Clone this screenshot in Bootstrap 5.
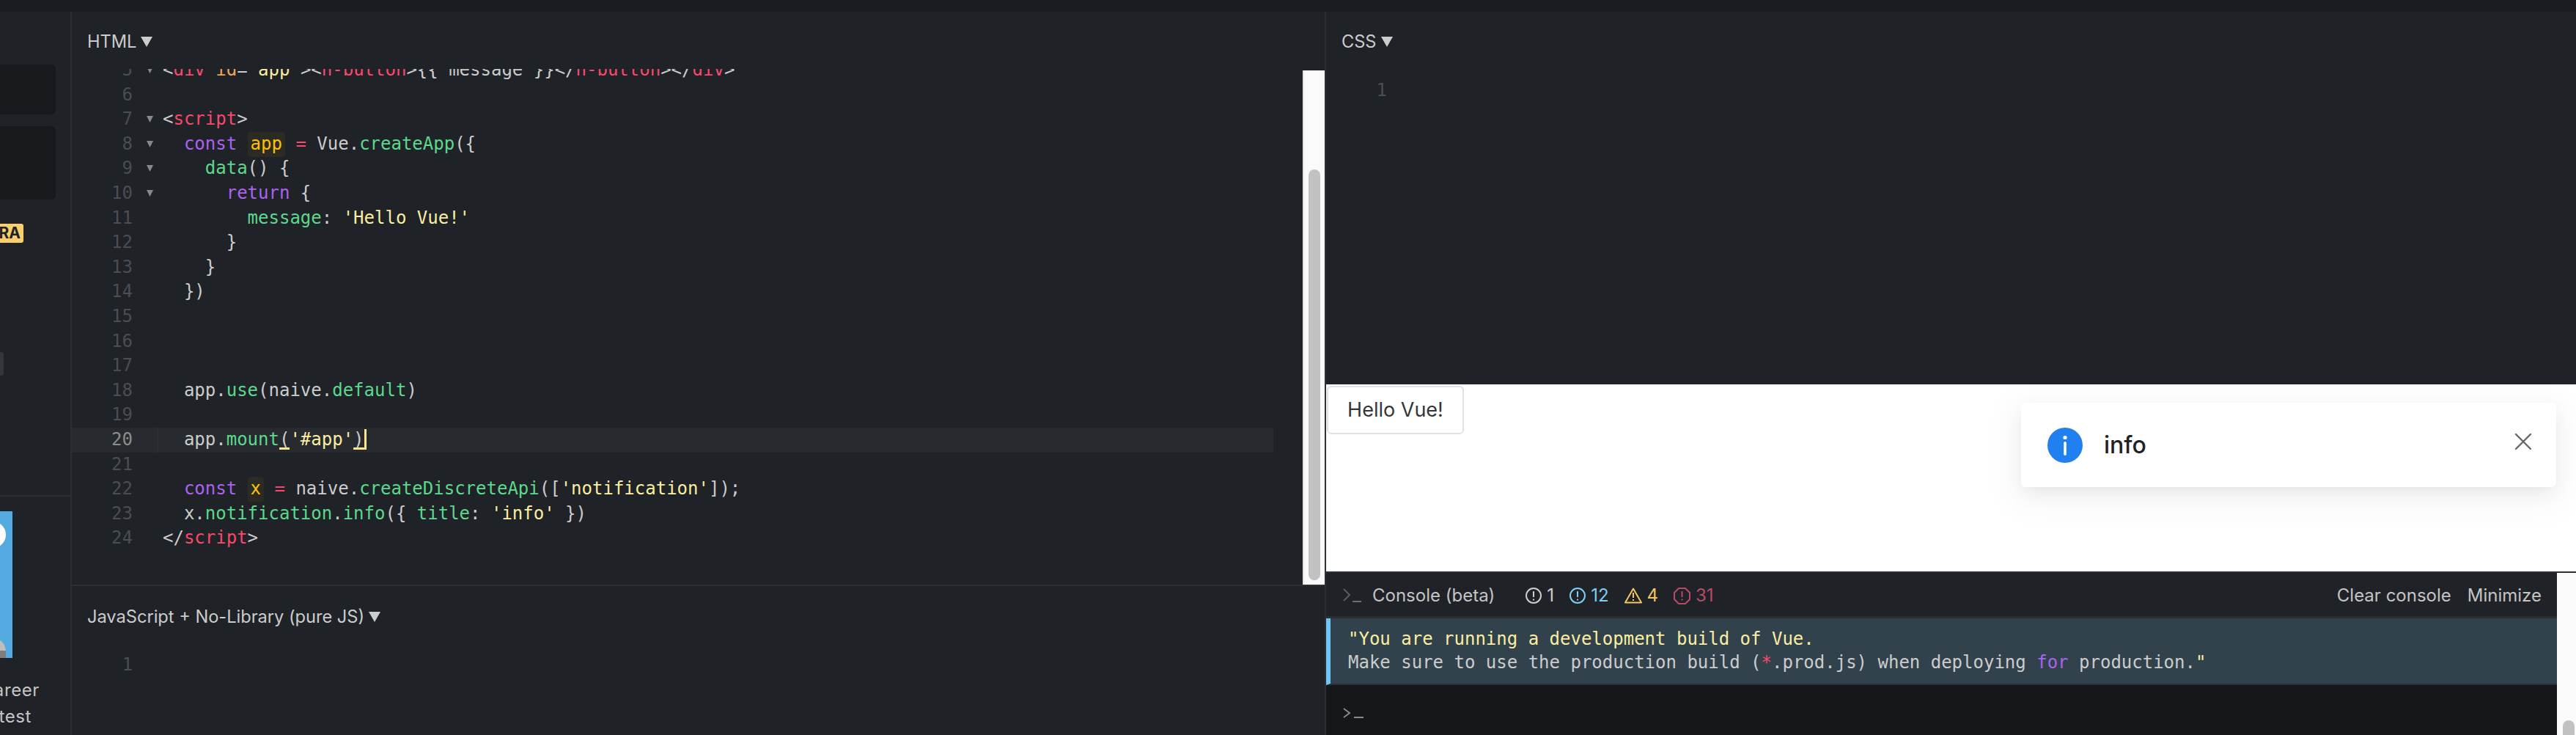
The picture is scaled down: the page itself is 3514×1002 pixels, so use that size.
<!DOCTYPE html>
<html lang="en">
<head>
<meta charset="utf-8">
<title>Editor</title>
<link href="https://cdn.jsdelivr.net/npm/bootstrap@5.3.0/dist/css/bootstrap.min.css" rel="stylesheet">
<style>
html,body{height:100%;overflow:hidden}
body{background:#1f2227;color:#ccc;font-family:Inter,"Liberation Sans",sans-serif;font-size:24px}
.topstrip{height:16px;background:#1a1c21;flex:none}
.workspace{height:986px}
.sidepane{width:98px;border-right:2px solid #2b2e33;overflow:hidden;flex:none}
.sidebox{width:76px;background:#17191d;border-radius:0 6px 6px 0}
.sb1{height:68px;margin-top:72px}
.sb2{height:100px;margin-top:16px}
.sidebadge{width:32px;height:26px;margin-top:33px;background:#f9cf6b;color:#1f2227;font-weight:700;font-size:21px;line-height:26px;border-radius:0 3px 3px 0;white-space:nowrap}
.sidechip{width:5px;height:32px;margin-top:149px;background:#33363b;border-radius:0 4px 4px 0}
.siderule{height:2px;background:#2b2e33;margin-top:163px}
.sideimg{display:block;margin-top:20px;flex:none}
.sidetext{width:54px;white-space:nowrap;line-height:36px;color:#c4c4c4;font-size:24px;letter-spacing:.6px}
.sidetext1{margin-top:26px}
.sidetext2{width:43px}
.midcol{width:1711px;border-right:2px solid #2b2e33;flex:none}
.rightcol{flex:1 1 0;min-width:0}
.htmlpane{height:783px;border-bottom:2px solid #2b2e33;flex:none}
.panelabel{height:78px;padding:4px 0 0 21px;color:#ccc;font-size:23.6px;flex:none}
.panelabel svg{margin-left:6px}
.codeclip{overflow:hidden;min-height:0}
.codescroll{min-width:0}
.coderows{margin-top:-15px;padding-right:40px}
.cl{height:33.6px;line-height:33.6px;font-family:"DejaVu Sans Mono","Liberation Mono",monospace;font-size:24px;color:#ccc;white-space:pre;font-variant-ligatures:none}
.lno{width:83px;text-align:right;color:#4a4d52;flex:none}
.fold{width:35px;margin-right:6px;flex:none;padding-left:19px;display:flex;align-items:center}
.cl.active{background:#272a2f}
.cl.active .lno{color:#8c8c8c}
.cl.active .fold{border-right:1px solid #2c2f34}
.src{position:relative}
.r{color:#f9486a}.p{color:#ab62f0}.g{color:#5cd98c}.y{color:#fbeea0}.o{color:#f0a356}
.hl{color:#ffc107;background:#2b2b24;padding:0 4px;border-radius:4px;display:inline-block;height:34px}
.mb{box-shadow:inset 0 -3px 0 #fde68a}
.caret{border-right:3px solid #fde68a;margin-right:-3px}
.vbar{width:30px;background:#fafafa;border-left:2px solid #e8e8e8;margin-top:2px;padding:0 6px 0 6px;flex:none}
.vthumb{width:16px;height:560px;margin-top:135px;background:#c1c1c1;border-radius:8px}
.cssarea{height:508px;flex:none;border:0}
.numonly{font-family:"DejaVu Sans Mono","Liberation Mono",monospace;color:#4a4d52;width:83px;text-align:right;height:33.6px;line-height:33.6px}
.cssnum{margin-top:13px}
.jsnum{margin-top:7px}
.jspane .panelabel{height:84px;padding-top:0}
.preview{height:255px;background:#fff;flex:none;position:relative}
.hellobtn{margin:2px 0 0 1px;width:187px;height:66px;border:2px solid #e0e0e6;border-radius:6px;background:#fff;color:#333639;font-size:27px;line-height:1;padding:0 0 2px}
.toast-box{position:absolute;left:948px;top:25px;width:730px;height:115px;background:#fff;border-radius:6px;box-shadow:0 6px 16px -9px rgba(0,0,0,.08),0 9px 28px 0 rgba(0,0,0,.05),0 12px 48px 16px rgba(0,0,0,.03);padding:0 33px 0 36px}
.toast-ico{flex:none}
.toast-title{font-size:32px;font-weight:500;color:#1f2225;margin-left:29px;line-height:1;margin-top:1px}
.closeico{margin-top:-10px}
.consolewrap{border-top:2px solid #2b2e33}
.conleft{min-width:0}
.consolehead{height:62px;border-bottom:3px solid #2b2e33;padding:3px 21px 0 22px;font-size:24px;flex:none}
.conlabel{color:#c4c4c4;margin-left:15px}
.cnt{margin-left:21px;gap:7px}
.cnt-first{margin-left:42px}
.cnt-d{color:#ccc}.cnt-i{color:#7fcdf5}.cnt-w{color:#f4c560}.cnt-e{color:#b84a67}
.conact{color:#c4c4c4;margin-left:22px}
.conmain{background:#16171b;min-height:0}
.conmsg{height:91px;background:#32424d;border-left:6px solid #6cc5f2;border-bottom:2px solid #2b2e33;padding:12px 0 0 24px;font-family:"DejaVu Sans Mono","Liberation Mono",monospace;font-size:24px;line-height:32px;white-space:pre;color:#ccc;flex:none}
.conprompt{padding:31px 0 0 23px}
.conprompt svg{display:block}
.conbar{width:26px;background:#fafafa;padding-left:8px;flex:none;overflow:hidden}
.conthumb{width:16px;height:40px;margin-top:201px;background:#c1c1c1;border-radius:8px}
</style>
</head>
<body>
<div class="d-flex flex-column vh-100">
<div class="topstrip"></div>
<div class="workspace d-flex">

<aside class="sidepane d-flex flex-column">
  <div class="sidebox sb1"></div>
  <div class="sidebox sb2"></div>
  <div class="sidebadge d-flex justify-content-end pe-1">EXTRA</div>
  <div class="sidechip"></div>
  <div class="siderule"></div>
  <svg class="sideimg" width="17" height="200" viewBox="0 0 17 200"><rect width="17" height="200" fill="#54a9e0"/><circle cx="-10" cy="32" r="18" fill="#fff"/><path d="M0 176Q6 178 8 190L8 200H0Z" fill="#bdbdbd"/><path d="M0 190H8V200H0Z" fill="#7d7d7d"/></svg>
  <div class="sidetext sidetext1 d-flex justify-content-end">Career</div>
  <div class="sidetext sidetext2 d-flex justify-content-end">Contest</div>
</aside>

<section class="midcol d-flex flex-column">
  <div class="htmlpane d-flex flex-column">
    <div class="panelabel d-flex align-items-center">HTML<svg width="16" height="14" viewBox="0 0 16 14"><path d="M0 0H16L8 14Z" fill="#ccc"/></svg></div>
    <div class="codeclip d-flex flex-grow-1">
      <div class="codescroll flex-grow-1"><div class="coderows">
<div class="cl d-flex"><span class="lno">5</span><span class="fold"><svg width="9" height="10" viewBox="0 0 9 10"><path d="M0 0H9L4.500 9Z" fill="#888"/></svg></span><span class="src">&lt;<span class="r">div</span> <span class="o">id</span>=<span class="y">"app"</span>&gt;&lt;<span class="r">n-button</span>&gt;{{ message }}&lt;/<span class="r">n-button</span>&gt;&lt;/<span class="r">div</span>&gt;</span></div>
<div class="cl d-flex"><span class="lno">6</span><span class="fold"></span><span class="src"></span></div>
<div class="cl d-flex"><span class="lno">7</span><span class="fold"><svg width="9" height="10" viewBox="0 0 9 10"><path d="M0 0H9L4.500 9Z" fill="#888"/></svg></span><span class="src">&lt;<span class="r">script</span>&gt;</span></div>
<div class="cl d-flex"><span class="lno">8</span><span class="fold"><svg width="9" height="10" viewBox="0 0 9 10"><path d="M0 0H9L4.500 9Z" fill="#888"/></svg></span><span class="src">  <span class="p">const</span> <span class="hl">app</span> <span class="r">=</span> Vue.<span class="g">createApp</span>({</span></div>
<div class="cl d-flex"><span class="lno">9</span><span class="fold"><svg width="9" height="10" viewBox="0 0 9 10"><path d="M0 0H9L4.500 9Z" fill="#888"/></svg></span><span class="src">    <span class="g">data</span>() {</span></div>
<div class="cl d-flex"><span class="lno">10</span><span class="fold"><svg width="9" height="10" viewBox="0 0 9 10"><path d="M0 0H9L4.500 9Z" fill="#888"/></svg></span><span class="src">      <span class="p">return</span> {</span></div>
<div class="cl d-flex"><span class="lno">11</span><span class="fold"></span><span class="src">        <span class="g">message</span>: <span class="y">'Hello Vue!'</span></span></div>
<div class="cl d-flex"><span class="lno">12</span><span class="fold"></span><span class="src">      }</span></div>
<div class="cl d-flex"><span class="lno">13</span><span class="fold"></span><span class="src">    }</span></div>
<div class="cl d-flex"><span class="lno">14</span><span class="fold"></span><span class="src">  })</span></div>
<div class="cl d-flex"><span class="lno">15</span><span class="fold"></span><span class="src"></span></div>
<div class="cl d-flex"><span class="lno">16</span><span class="fold"></span><span class="src"></span></div>
<div class="cl d-flex"><span class="lno">17</span><span class="fold"></span><span class="src"></span></div>
<div class="cl d-flex"><span class="lno">18</span><span class="fold"></span><span class="src">  app.<span class="g">use</span>(naive.<span class="g">default</span>)</span></div>
<div class="cl d-flex"><span class="lno">19</span><span class="fold"></span><span class="src"></span></div>
<div class="cl d-flex active"><span class="lno">20</span><span class="fold"></span><span class="src">  app.<span class="g">mount</span><span class="mb">(</span><span class="y">'#app'</span><span class="mb caret">)</span></span></div>
<div class="cl d-flex"><span class="lno">21</span><span class="fold"></span><span class="src"></span></div>
<div class="cl d-flex"><span class="lno">22</span><span class="fold"></span><span class="src">  <span class="p">const</span> <span class="hl">x</span> <span class="r">=</span> naive.<span class="g">createDiscreteApi</span>([<span class="y">'notification'</span>]);</span></div>
<div class="cl d-flex"><span class="lno">23</span><span class="fold"></span><span class="src">  x.<span class="g">notification</span>.<span class="g">info</span>({ <span class="g">title</span>: <span class="y">'info'</span> })</span></div>
<div class="cl d-flex"><span class="lno">24</span><span class="fold"></span><span class="src">&lt;/<span class="r">script</span>&gt;</span></div>
      </div></div>
      <div class="vbar"><div class="vthumb"></div></div>
    </div>
  </div>
  <div class="jspane flex-grow-1">
    <div class="panelabel d-flex align-items-center">JavaScript + No-Library (pure JS)<svg width="16" height="14" viewBox="0 0 16 14"><path d="M0 0H16L8 14Z" fill="#ccc"/></svg></div>
    <div class="numonly jsnum">1</div>
  </div>
</section>

<section class="rightcol d-flex flex-column">
  <div class="cssarea">
    <div class="panelabel d-flex align-items-center">CSS<svg width="16" height="14" viewBox="0 0 16 14"><path d="M0 0H16L8 14Z" fill="#ccc"/></svg></div>
    <div class="numonly cssnum">1</div>
  </div>
  <div class="preview">
    <button type="button" class="hellobtn d-block">Hello Vue!</button>
    <div class="toast-box d-flex align-items-center">
      <svg width="48" height="48" viewBox="0 0 48 48" class="toast-ico"><circle cx="24" cy="24" r="24" fill="#2080f0"/><circle cx="24" cy="13.5" r="2.6" fill="#fff"/><rect x="22.2" y="19" width="3.6" height="19" rx="1.8" fill="#fff"/></svg>
      <div class="toast-title flex-grow-1">info</div>
      <svg width="24" height="24" viewBox="0 0 24 24" class="closeico"><path d="M2 2L22 22M22 2L2 22" stroke="#666" stroke-width="2.4" stroke-linecap="round"/></svg>
    </div>
  </div>
  <div class="consolewrap flex-grow-1 d-flex">
    <div class="conleft flex-grow-1 d-flex flex-column">
      <div class="consolehead d-flex align-items-center">
        <svg width="26" height="20" viewBox="0 0 26 20"><path d="M2 1L10 9L2 17" fill="none" stroke="#5a5d62" stroke-width="2"/><path d="M14 18H26" stroke="#6a6d72" stroke-width="2"/></svg>
        <span class="conlabel">Console (beta)</span>
        <span class="cnt cnt-first d-flex align-items-center cnt-d"><svg width="22" height="22" viewBox="0 0 22 22"><circle cx="11" cy="11" r="10" fill="none" stroke="#ccc" stroke-width="2"/><path d="M11 5V13M11 15.5V17.5" stroke="#ccc" stroke-width="2"/></svg>1</span>
        <span class="cnt d-flex align-items-center cnt-i"><svg width="22" height="22" viewBox="0 0 22 22"><circle cx="11" cy="11" r="10" fill="none" stroke="#7fcdf5" stroke-width="2"/><path d="M11 5V13M11 15.5V17.5" stroke="#7fcdf5" stroke-width="2"/></svg>12</span>
        <span class="cnt d-flex align-items-center cnt-w"><svg width="24" height="22" viewBox="0 0 24 22"><path d="M12 1.5L23 20.5H1Z" fill="none" stroke="#f4c560" stroke-width="2" stroke-linejoin="round"/><path d="M12 7V14M12 16V18" stroke="#f4c560" stroke-width="2"/></svg>4</span>
        <span class="cnt d-flex align-items-center cnt-e"><svg width="23" height="23" viewBox="0 0 23 23"><path d="M7 1H16L22 7V16L16 22H7L1 16V7Z" fill="none" stroke="#b84a67" stroke-width="2"/><path d="M11.500 5V13M11.500 15.500V17.500" stroke="#b84a67" stroke-width="2"/></svg>31</span>
        <span class="conact ms-auto">Clear console</span>
        <span class="conact">Minimize</span>
      </div>
      <div class="conmain flex-grow-1 d-flex flex-column">
        <div class="conmsg"><span class="y">"You are running a development build of Vue.</span>
Make sure to use the production build (<span class="r">*</span>.prod.js) when deploying <span class="p">for</span> production.<span class="y">"</span></div>
        <div class="conprompt"><svg width="28" height="14" viewBox="0 0 28 14"><path d="M1 1L9 7L1 13" fill="none" stroke="#8a8a8a" stroke-width="2"/><path d="M15 13H28" stroke="#8a8a8a" stroke-width="2"/></svg></div>
      </div>
    </div>
    <div class="conbar"><div class="conthumb"></div></div>
  </div>
</section>

</div>
</div>
</body>
</html>
